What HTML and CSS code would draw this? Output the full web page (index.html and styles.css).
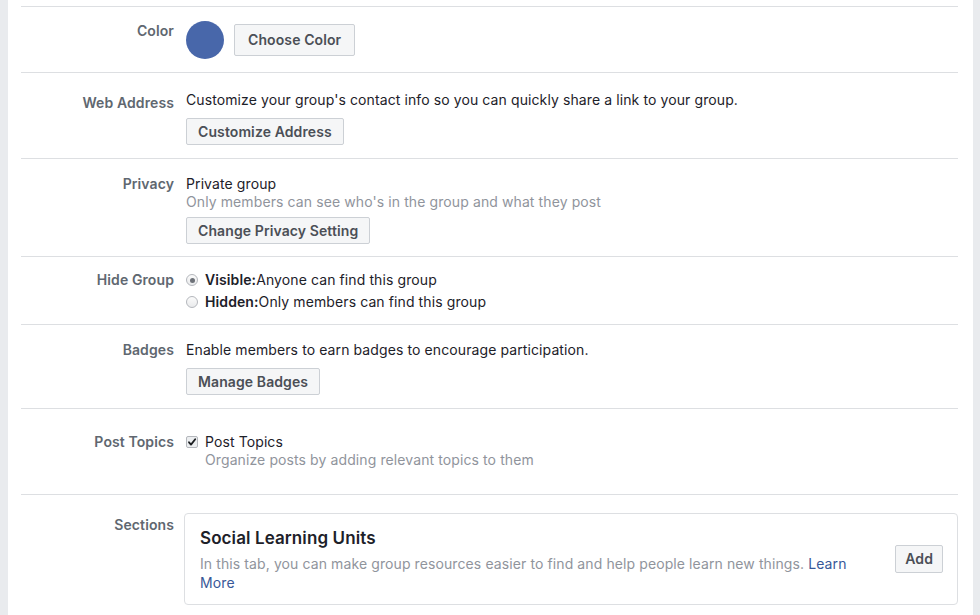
FILE: index.html
```html
<!DOCTYPE html>
<html>
<head>
<meta charset="utf-8">
<link rel="stylesheet" href="styles.css">
</head>
<body>
<div class="page">
  <div class="side side-left"></div>
  <main class="panel">
    <div class="rows">
      <section class="row row-color">
        <div class="label label-color">Color</div>
        <div class="content content-inline">
          <span class="swatch"></span>
          <button class="btn btn-tall">Choose Color</button>
        </div>
      </section>

      <section class="row row-web">
        <div class="label label-web">Web Address</div>
        <div class="content">
          <div class="text">Customize your group's contact info so you can quickly share a link to your group.</div>
          <button class="btn btn-gap">Customize Address</button>
        </div>
      </section>

      <section class="row row-privacy">
        <div class="label">Privacy</div>
        <div class="content">
          <div class="text">Private group</div>
          <div class="text muted">Only members can see who's in the group and what they post</div>
          <button class="btn btn-gap-small">Change Privacy Setting</button>
        </div>
      </section>

      <section class="row row-hide">
        <div class="label">Hide Group</div>
        <div class="content">
          <label class="option">
            <span class="radio checked"></span>
            <span class="text"><b>Visible:</b>Anyone can find this group</span>
          </label>
          <label class="option option-last">
            <span class="radio"></span>
            <span class="text"><b>Hidden:</b>Only members can find this group</span>
          </label>
        </div>
      </section>

      <section class="row row-badges">
        <div class="label">Badges</div>
        <div class="content">
          <div class="text">Enable members to earn badges to encourage participation.</div>
          <button class="btn btn-gap">Manage Badges</button>
        </div>
      </section>

      <section class="row row-topics">
        <div class="label">Post Topics</div>
        <div class="content">
          <label class="check-option">
            <span class="checkbox">
              <svg width="12" height="12" viewBox="0 0 12 12"><path d="M3 6.3 L5 8.6 L9.2 3.2" fill="none" stroke="#1c1e21" stroke-width="1.8" stroke-linecap="round" stroke-linejoin="round"/></svg>
            </span>
            <span class="option-body">
              <span class="text">Post Topics</span>
              <span class="text muted">Organize posts by adding relevant topics to them</span>
            </span>
          </label>
        </div>
      </section>

      <section class="row row-sections">
        <div class="label label-sections">Sections</div>
        <div class="content">
          <div class="card">
            <div class="card-body">
              <div class="card-title">Social Learning Units</div>
              <div class="card-desc">In this tab, you can make group resources easier to find and help people learn new things. <a class="link" href="#">Learn</a><br><a class="link" href="#">More</a></div>
            </div>
            <button class="btn btn-add">Add</button>
          </div>
        </div>
      </section>
    </div>
  </main>
  <div class="side side-right"></div>
</div>
</body>
</html>
```

FILE: styles.css
```css
* { box-sizing: border-box; }

html, body {
  margin: 0;
  padding: 0;
  height: 100%;
}

body {
  background: #e9ebee;
  font-family: Inter, "Liberation Sans", Arial, sans-serif;
  font-size: 14px;
  letter-spacing: 0.1px;
  color: #1d2129;
  overflow: hidden;
}

.page {
  display: flex;
  height: 615px;
}

.side-left { width: 8px; flex: none; }
.side-right { width: 9px; flex: none; }

.panel {
  flex: 1;
  background: #fff;
  padding: 6px 15px 0 13px;
}

.rows {
  border-top: 1px solid #dddfe2;
}

.row {
  display: flex;
  border-bottom: 1px solid #dddfe2;
  padding: 15px 0 13px;
}

.label {
  width: 153px;
  flex: none;
  text-align: right;
  font-weight: 600;
  color: #606770;
  line-height: 18px;
}

.content {
  margin-left: 12px;
  flex: 1;
  display: flex;
  flex-direction: column;
  align-items: flex-start;
}

.content-inline {
  flex-direction: row;
  align-items: flex-start;
}

.text {
  line-height: 18px;
  display: block;
}

.muted { color: #90949c; }

.row-color { padding-top: 14px; padding-bottom: 13px; }
.label-color { padding-top: 1px; }

.swatch {
  width: 38px;
  height: 38px;
  border-radius: 50%;
  background: #4867aa;
  flex: none;
}

.btn {
  font-family: inherit;
  font-size: 14px;
  letter-spacing: 0.1px;
  font-weight: 600;
  color: #4b4f56;
  background: #f5f6f7;
  border: 1px solid #ccd0d5;
  border-radius: 2px;
  height: 27px;
  padding: 0 11px;
  line-height: 25px;
  cursor: pointer;
}

.btn-tall {
  height: 32px;
  line-height: 30px;
  margin-left: 10px;
  margin-top: 3px;
  padding: 0 13px;
}

.btn-gap { margin-top: 9px; }
.btn-gap-small { margin-top: 6px; }

.row-web { padding-top: 18px; }
.label-web { padding-top: 3px; }

.row-privacy { padding-top: 16px; padding-bottom: 12px; }

.row-hide { padding-top: 14px; padding-bottom: 13px; }

.option {
  display: flex;
  align-items: flex-start;
  height: 22px;
}

.option-last { height: 18px; }

.option b { color: #1d2129; font-weight: 600; }

.radio {
  width: 12px;
  height: 12px;
  border-radius: 50%;
  border: 1px solid #b4b7bc;
  background: linear-gradient(#fbfbfb, #e9eaec);
  margin: 3px 7px 0 0;
  flex: none;
  position: relative;
}

.radio.checked::after {
  content: "";
  position: absolute;
  left: 2.5px;
  top: 2.5px;
  width: 5px;
  height: 5px;
  border-radius: 50%;
  background: #6d7178;
}

.row-badges { padding-top: 16px; padding-bottom: 13px; }

.row-topics { padding-top: 24px; padding-bottom: 25px; }

.check-option {
  display: flex;
  align-items: flex-start;
}

.checkbox {
  width: 12px;
  height: 12px;
  border: 1px solid #b4b7bc;
  border-radius: 2px;
  background: #eceef0;
  margin: 3px 7px 0 0;
  flex: none;
  display: flex;
  align-items: center;
  justify-content: center;
}

.checkbox svg { display: block; margin: -1px; }

.option-body { display: flex; flex-direction: column; }

.row-sections {
  border-bottom: none;
  padding-top: 18px;
  padding-bottom: 0;
}

.label-sections { padding-top: 3px; }

.content .card { margin-left: -2px; }

.card {
  width: 774px;
  height: 92px;
  border: 1px solid #dddfe2;
  border-radius: 4px;
  display: flex;
  align-items: center;
  padding: 0 14px 0 15px;
}

.card-body {
  flex: 1;
  align-self: flex-start;
  padding-top: 14px;
  padding-right: 40px;
}

.card-title {
  font-size: 17px;
  font-weight: 600;
  color: #1d2129;
  line-height: 20px;
  margin-bottom: 6px;
}

.card-desc {
  color: #90949c;
  line-height: 19px;
}

.link {
  color: #385898;
  text-decoration: none;
}

.btn-add {
  height: 28px;
  padding: 0 9px;
  line-height: 26px;
  margin-top: -1px;
  flex: none;
}
```
